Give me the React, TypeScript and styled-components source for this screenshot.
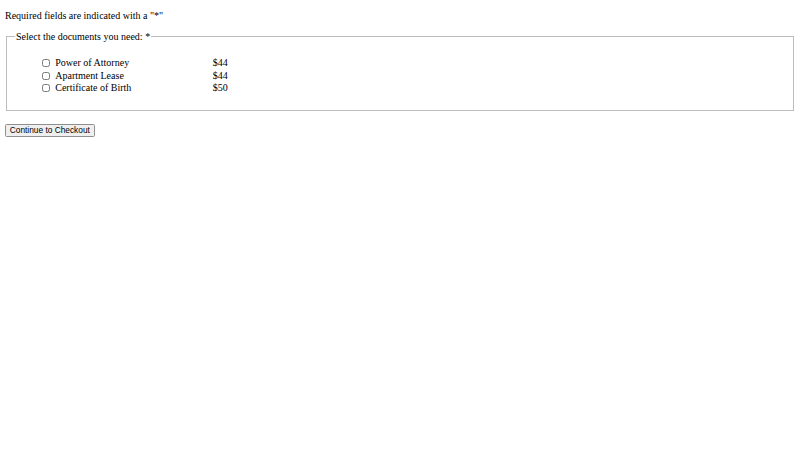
import React from "react";
import styled, { createGlobalStyle } from "styled-components";

const Global = createGlobalStyle`
  body {
    margin: 5px;
    background: #ffffff;
    color: #000000;
    font-family: "Liberation Serif", "Times New Roman", serif;
    font-size: 10px;
  }
`;

const Intro = styled.p`
  margin: 5px 0 9px;
  line-height: 11.5px;
`;

const Group = styled.fieldset`
  margin: 0 1.25px;
  padding: 2px 7.5px 6.25px;
  border: 1px solid #bdbdbd;
  min-width: 0;
`;

const Caption = styled.legend`
  padding: 0 1.25px;
  line-height: 11.5px;
`;

const List = styled.ul`
  list-style: none;
  margin: 13px 0 9px;
  padding: 0 0 0 25px;
`;

const Item = styled.li`
  display: flex;
  align-items: baseline;
  height: 12.5px;
  line-height: 12.5px;
`;

const Choice = styled.label`
  display: flex;
  align-items: center;
  width: 173px;
`;

const Box = styled.input`
  width: 8px;
  height: 8px;
  margin: 0 5px 0 2.5px;
`;

const Price = styled.span`
  position: relative;
  top: -1px;
`;

const Actions = styled.div`
  margin-top: 13px;
`;

const Submit = styled.button`
  font-family: "Liberation Sans", Arial, sans-serif;
  font-size: 8.33px;
  line-height: 10px;
  padding: 0.6px 3.75px;
  background: #efefef;
  color: #000;
  border: 1px solid #8f8f8f;
  border-radius: 1.5px;
`;

const docs = [
  { name: "Power of Attorney", price: "$44" },
  { name: "Apartment Lease", price: "$44" },
  { name: "Certificate of Birth", price: "$50" },
];

export default function App() {
  return (
    <>
      <Global />
      <Intro>Required fields are indicated with a "*"</Intro>
      <Group>
        <Caption>Select the documents you need: *</Caption>
        <List>
          {docs.map((d) => (
            <Item key={d.name}>
              <Choice>
                <Box type="checkbox" />
                {d.name}
              </Choice>
              <Price>{d.price}</Price>
            </Item>
          ))}
        </List>
      </Group>
      <Actions>
        <Submit type="button">Continue to Checkout</Submit>
      </Actions>
    </>
  );
}
